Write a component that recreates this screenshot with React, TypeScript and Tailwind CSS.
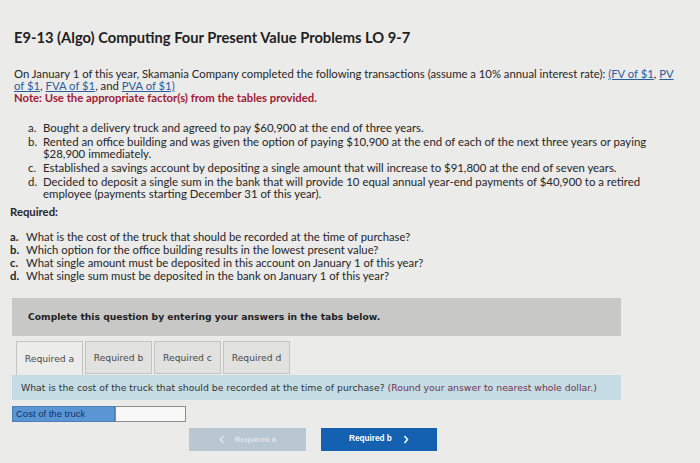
import React from "react";

const TRANSACTIONS = [
  {
    key: "a.",
    lines: ["Bought a delivery truck and agreed to pay $60,900 at the end of three years."],
  },
  {
    key: "b.",
    lines: [
      "Rented an office building and was given the option of paying $10,900 at the end of each of the next three years or paying",
      "$28,900 immediately.",
    ],
  },
  {
    key: "c.",
    lines: ["Established a savings account by depositing a single amount that will increase to $91,800 at the end of seven years."],
  },
  {
    key: "d.",
    lines: [
      "Decided to deposit a single sum in the bank that will provide 10 equal annual year-end payments of $40,900 to a retired",
      "employee (payments starting December 31 of this year).",
    ],
  },
];

const REQUIRED = [
  { key: "a.", text: "What is the cost of the truck that should be recorded at the time of purchase?" },
  { key: "b.", text: "Which option for the office building results in the lowest present value?" },
  { key: "c.", text: "What single amount must be deposited in this account on January 1 of this year?" },
  { key: "d.", text: "What single sum must be deposited in the bank on January 1 of this year?" },
];

const TABS = ["Required a", "Required b", "Required c", "Required d"];

const Chevron: React.FC<{ dir: "left" | "right"; className?: string }> = ({ dir, className }) => (
  <svg width="6" height="9" viewBox="0 0 6 9" className={className} fill="none" stroke="currentColor" strokeWidth="1.5">
    {dir === "left" ? <path d="M4.5 1 1.5 4.5 4.5 8" /> : <path d="M1.5 1 4.5 4.5 1.5 8" />}
  </svg>
);

const App: React.FC = () => {
  return (
    <div className="w-[700px] h-[463px] overflow-hidden bg-[#ebebea] text-[#262626] font-['Lato','Liberation_Sans',sans-serif]">
      <div className="pl-[14px] pt-[28px]">
        <h1 className="text-[14.7px] leading-[18px] font-bold text-[#1e1e1e]">
          E9-13 (Algo) Computing Four Present Value Problems LO 9-7
        </h1>

        <p className="mt-[22px] text-[11.3px] leading-[12px] whitespace-nowrap">
          On January 1 of this year, Skamania Company completed the following transactions (assume a 10% annual interest rate):{" "}
          <span className="text-[#2b5c9c] underline">(FV of $1</span>,{" "}
          <span className="text-[#2b5c9c] underline">PV</span>
          <br />
          <span className="text-[#2b5c9c] underline">of $1</span>,{" "}
          <span className="text-[#2b5c9c] underline">FVA of $1</span>, and{" "}
          <span className="text-[#2b5c9c] underline">PVA of $1)</span>
        </p>
        <p className="text-[11.3px] leading-[12px] font-bold text-[#a01a35]">
          Note: Use the appropriate factor(s) from the tables provided.
        </p>

        <div className="mt-[18px] pl-[14px] flex flex-col gap-[2px] text-[11.4px] leading-[12px]">
          {TRANSACTIONS.map((item) => (
            <div key={item.key} className="flex">
              <span className="w-[15px] shrink-0">{item.key}</span>
              <div>
                {item.lines.map((line) => (
                  <div key={line} className="whitespace-nowrap">
                    {line}
                  </div>
                ))}
              </div>
            </div>
          ))}
        </div>
      </div>

      <div className="pl-[10px]">
        <div className="mt-[6px] text-[11.3px] leading-[12px] font-bold">Required:</div>

        <div className="mt-[12px] flex flex-col text-[11.3px] leading-[13px]">
          {REQUIRED.map((item) => (
            <div key={item.key} className="flex">
              <span className="w-[16px] shrink-0 font-bold">{item.key}</span>
              <span>{item.text}</span>
            </div>
          ))}
        </div>
      </div>

      <div className="pl-[12px] w-[621px] font-['DejaVu_Sans',sans-serif]">
        <div className="mt-[16px] h-[38px] bg-[#c8c8c7] flex items-center pl-[16px] text-[9.2px] font-bold text-[#1f1f1f]">
          Complete this question by entering your answers in the tabs below.
        </div>

        <div className="mt-[5px] flex gap-[2px] pl-[4px]">
          {TABS.map((tab, index) => (
            <div
              key={tab}
              className={
                index === 0
                  ? "w-[67px] h-[34px] flex items-center justify-center bg-[#ececeb] border border-b-0 border-[#c4c4c4] text-[9.2px] text-[#4a4a4a]"
                  : "w-[67px] h-[33px] flex items-center justify-center bg-[#e1e1e0] border border-[#c4c4c4] text-[9.2px] text-[#4a4a4a]"
              }
            >
              {tab}
            </div>
          ))}
        </div>

        <div className="h-[25px] bg-[#c5dce4] flex items-center pl-[9px] text-[9.3px] text-[#333] whitespace-nowrap">
          What is the cost of the truck that should be recorded at the time of purchase?&nbsp;
          <span className="text-[#6e3552]">(Round your answer to nearest whole dollar.)</span>
        </div>

        <div className="mt-[6px] flex h-[16px]">
          <div className="w-[103px] bg-[#5a96d4] border border-[#4d7fb6] flex items-center pl-[3px] font-['Liberation_Sans',sans-serif] text-[9.5px] text-[#14306a]">
            Cost of the truck
          </div>
          <div className="w-[71px] bg-[#f8f8f8] border border-[#8c8c8c]" />
        </div>

        <div className="mt-[6px] flex gap-[15px] pl-[177px] font-['Liberation_Sans',sans-serif]">
          <div className="w-[117px] h-[23px] bg-[#b8c7d2] flex items-center justify-center gap-[10px] text-[8px] font-bold text-[#dbe4eb]">
            <Chevron dir="left" />
            <span>Required a</span>
          </div>
          <div className="w-[116px] h-[23px] bg-[#1461b1] flex items-center justify-center gap-[11px] text-[8.2px] font-bold text-white">
            <span>Required b</span>
            <Chevron dir="right" />
          </div>
        </div>
      </div>
    </div>
  );
};

export default App;
